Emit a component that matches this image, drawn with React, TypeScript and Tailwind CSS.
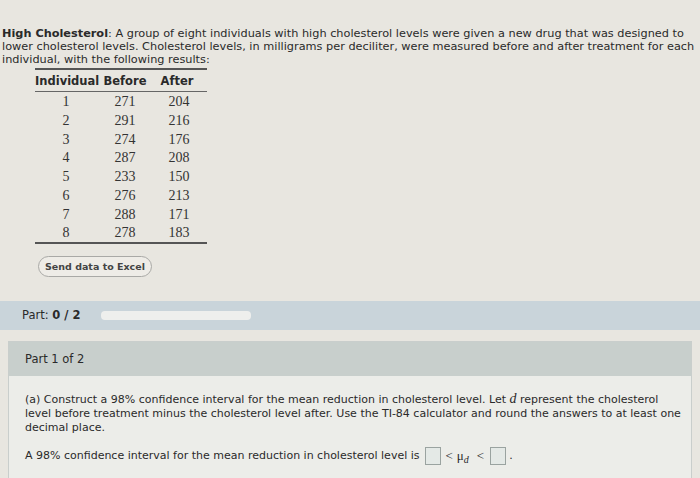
const rows = [
  [1, 271, 204],
  [2, 291, 216],
  [3, 274, 176],
  [4, 287, 208],
  [5, 233, 150],
  [6, 276, 213],
  [7, 288, 171],
  [8, 278, 183],
];

const serif = { fontFamily: '"Liberation Serif", serif' };

const App = () => {
  return (
    <div
      className="w-[700px] h-[478px] overflow-hidden bg-[#e8e6e0] text-[#2a2a2a]"
      style={{ fontFamily: '"DejaVu Sans", Verdana, sans-serif' }}
    >
      {/* Énoncé */}
      <div className="pt-[27px] pl-[2px] text-[11.3px] leading-[13px] whitespace-nowrap">
        <span className="font-bold">High Cholesterol</span>: A group of eight individuals with high cholesterol levels were given a new drug that was designed to
        <br />
        lower cholesterol levels. Cholesterol levels, in milligrams per deciliter, were measured before and after treatment for each
        <br />
        individual, with the following results:
      </div>

      {/* Tableau */}
      <div className="ml-[35px] mt-[2px] w-[172px]">
        <div className="border-t-2 border-[#555]" />
        <div className="flex text-[11.5px] leading-[14px] font-bold h-[22px] items-end pb-[3px] border-b border-[#666]">
          <div className="w-[68px] text-left">Individual</div>
          <div className="w-[44px] text-center">Before</div>
          <div className="flex-1 text-center">After</div>
        </div>
        <div style={serif}>
          {rows.map(([i, b, a]) => (
            <div key={i} className="flex h-[18.8px] items-center text-[14px] text-[#333]">
              <div className="w-[62px] text-center">{i}</div>
              <div className="w-[56px] text-center">{b}</div>
              <div className="w-[52px] text-center">{a}</div>
            </div>
          ))}
        </div>
        <div className="border-t-2 border-[#555]" />
      </div>

      <div className="ml-[38px] mt-[12px] flex">
        <button className="h-[21px] px-[6px] rounded-full border border-[#a9a9a6] bg-[#eeece7] text-[9.5px] font-bold text-[#444]">
          Send data to Excel
        </button>
      </div>

      {/* Progression */}
      <div className="mt-[24px] h-[29px] bg-[#c9d4da] flex items-center pl-[22px] text-[11.5px]">
        <span>
          Part: <span className="font-bold">0 / 2</span>
        </span>
        <div className="ml-[21px] w-[150px] h-[9px] rounded-sm bg-[#eeefed]" />
      </div>

      {/* Partie 1 */}
      <div className="mx-[8px] mt-[11px] border border-[#c9cecc] bg-[#ecede9]">
        <div className="h-[34px] bg-[#c8cfcc] flex items-center pl-[16px] text-[11.5px]">
          Part 1 of 2
        </div>
        <div className="pl-[16px] pr-[8px] pt-[16px] pb-[30px] text-[11px] leading-[14px]">
          <p>
            (a) Construct a 98% confidence interval for the mean reduction in cholesterol level. Let{" "}
            <span className="italic text-[14px] leading-none" style={serif}>d</span> represent the cholesterol level before treatment minus the cholesterol level after. Use the TI-84 calculator and round the answers to at least one decimal place.
          </p>
          <div className="mt-[12px] flex items-center">
            <span>A 98% confidence interval for the mean reduction in cholesterol level is</span>
            <span className="ml-[5px] w-[16px] h-[18px] border border-[#9aa3a0] bg-[#e4e9e6]" />
            <span className="ml-[5px] text-[13px]" style={serif}>&lt;</span>
            <span className="ml-[4px] text-[13px]" style={serif}>
              μ<sub className="text-[10px] italic">d</sub>
            </span>
            <span className="ml-[8px] text-[13px]" style={serif}>&lt;</span>
            <span className="ml-[6px] w-[16px] h-[18px] border border-[#9aa3a0] bg-[#e4e9e6]" />
            <span className="ml-[3px]">.</span>
          </div>
        </div>
      </div>
    </div>
  );
};

export default App;
